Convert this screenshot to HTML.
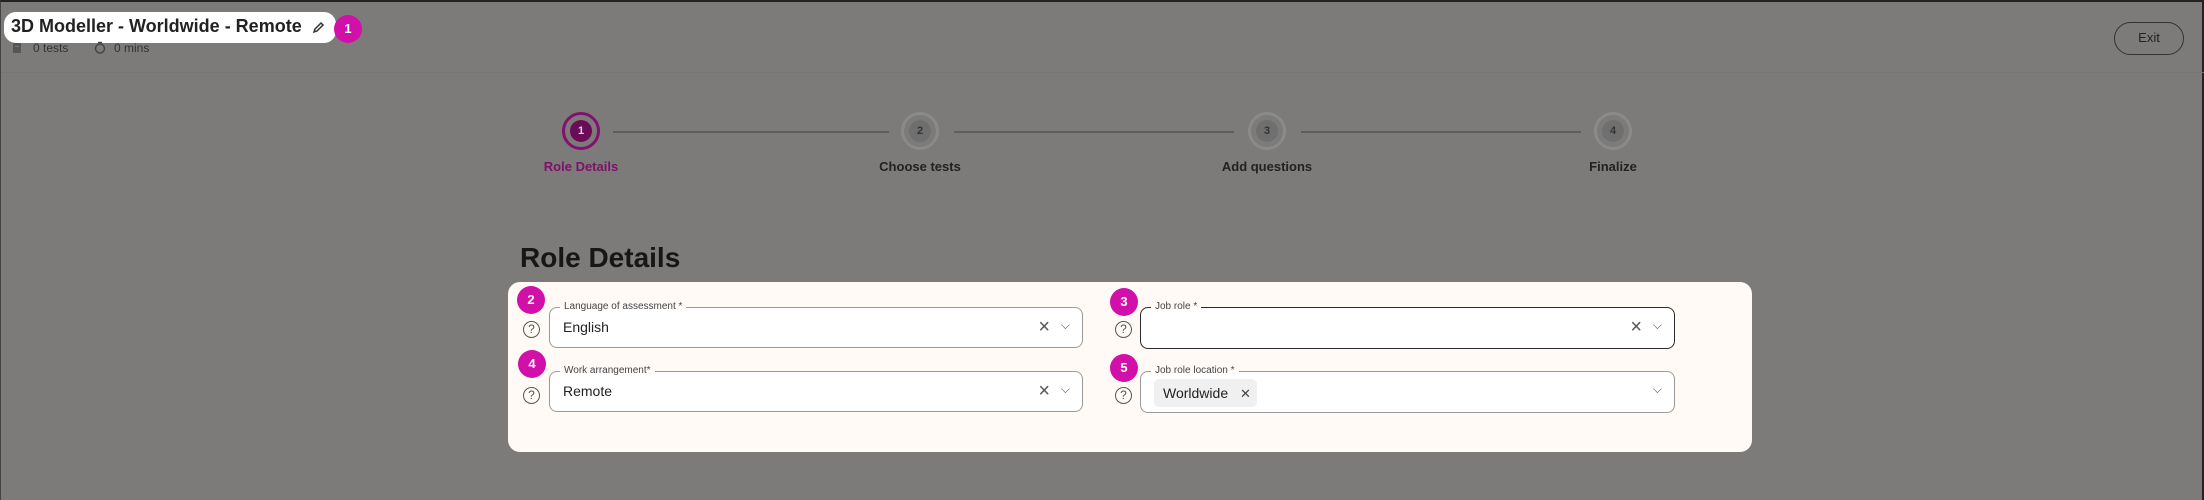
<!DOCTYPE html>
<html><head><meta charset="utf-8"><style>
*{box-sizing:border-box;margin:0;padding:0}
body{width:2204px;height:500px;background:#7c7b79;font-family:"Liberation Sans",sans-serif;position:relative;overflow:hidden;border-top:2px solid #222;border-right:2px solid #222;border-left:1px solid #444}
.a{position:absolute}
.badge{position:absolute;width:28px;height:28px;border-radius:50%;background:#d10fa9;color:#fff;font-weight:bold;font-size:13px;text-align:center;line-height:28px}
.q{position:absolute;width:17px;height:17px;border-radius:50%;border:1.5px solid #555;color:#555;font-size:12px;text-align:center;line-height:14px}
.field{position:absolute;border:1.3px solid #9a9a9a;border-radius:8px;background:#fff}
.lbl{position:absolute;top:-8px;left:10px;padding:0 4px;font-size:10px;color:#444;line-height:14px;background:linear-gradient(#fffaf6 50%,#fff 50%)}
.val{position:absolute;left:13px;top:11px;font-size:14px;color:#222}
.step{position:absolute;width:38px;height:38px;border-radius:50%;border:3px solid #8a8a8a;top:110px}
.step i{position:absolute;left:5px;top:5px;width:22px;height:22px;border-radius:50%;background:#6f6f6f;font-style:normal;font-size:11px;font-weight:bold;color:#333;text-align:center;line-height:22px}
.sl{position:absolute;top:157px;font-size:13px;color:#222;width:200px;text-align:center;font-weight:bold}
.line{position:absolute;top:129px;height:1.5px;background:#5e5e5e}
.x{position:absolute;right:32px;top:8px;font-size:20px;color:#555}
.ch{position:absolute;right:12px;top:10px;font-size:12px;color:#555}
</style></head><body>
<div class="a" style="left:3px;top:10px;width:332px;height:31px;background:#fff;border-radius:12px"></div>
<div class="a" style="left:10px;top:14px;font-size:18px;font-weight:bold;color:#222">3D Modeller - Worldwide - Remote</div>
<svg class="a" style="left:311px;top:19px" width="13" height="13" viewBox="0 0 13 13"><path d="M2 11 L3 8 L9 2 L11 4 L5 10 Z" fill="none" stroke="#333" stroke-width="1.5"/></svg>
<div class="badge" style="left:333px;top:13px">1</div>
<svg class="a" style="left:11px;top:40px" width="10" height="12"><rect x="1" y="1" width="8" height="10" fill="#555"/><rect x="3" y="4" width="4" height="1" fill="#7c7b79"/></svg>
<div class="a" style="left:32px;top:39px;font-size:12px;color:#333">0 tests</div>
<svg class="a" style="left:93px;top:39px" width="12" height="13"><circle cx="6" cy="7.5" r="4.5" fill="none" stroke="#444" stroke-width="1.4"/><line x1="4" y1="1.5" x2="8" y2="1.5" stroke="#444" stroke-width="1.4"/></svg>
<div class="a" style="left:113px;top:39px;font-size:12px;color:#333">0 mins</div>
<div class="a" style="left:2113px;top:20px;width:70px;height:33px;border:1.5px solid #333;border-radius:17px;text-align:center;line-height:30px;font-size:13px;color:#222">Exit</div>
<div class="a" style="left:0;top:70px;width:2204px;height:1px;background:#777674"></div>

<div class="step" style="left:561px;border-color:#84106f"><i style="background:#6a0c58;color:#ddd">1</i></div>
<div class="step" style="left:900px"><i>2</i></div>
<div class="step" style="left:1247px"><i>3</i></div>
<div class="step" style="left:1593px"><i>4</i></div>
<div class="line" style="left:612px;width:276px"></div>
<div class="line" style="left:953px;width:280px"></div>
<div class="line" style="left:1300px;width:280px"></div>
<div class="sl" style="left:480px;color:#80106c">Role Details</div>
<div class="sl" style="left:819px">Choose tests</div>
<div class="sl" style="left:1166px">Add questions</div>
<div class="sl" style="left:1512px">Finalize</div>

<div class="a" style="left:519px;top:240px;font-size:28px;font-weight:bold;color:#161616">Role Details</div>
<div class="a" style="left:507px;top:280px;width:1244px;height:170px;background:#fffaf6;border-radius:12px"></div>

<div class="badge" style="left:516px;top:284px">2</div>
<div class="q" style="left:522px;top:319px">?</div>
<div class="field" style="left:548px;top:305px;width:534px;height:41px"><div class="lbl">Language of assessment *</div><div class="val">English</div>
<div class="x">×</div><div class="ch">⌵</div></div>
<div class="badge" style="left:517px;top:348px">4</div>
<div class="q" style="left:522px;top:385px">?</div>
<div class="field" style="left:548px;top:369px;width:534px;height:41px"><div class="lbl">Work arrangement*</div><div class="val">Remote</div>
<div class="x">×</div><div class="ch">⌵</div></div>

<div class="badge" style="left:1109px;top:286px">3</div>
<div class="q" style="left:1114px;top:319px">?</div>
<div class="field" style="left:1139px;top:305px;width:535px;height:42px;border:1.6px solid #2a2a2a"><div class="lbl">Job role *</div>
<div class="x">×</div><div class="ch">⌵</div></div>
<div class="badge" style="left:1109px;top:352px">5</div>
<div class="q" style="left:1114px;top:385px">?</div>
<div class="field" style="left:1139px;top:369px;width:535px;height:42px"><div class="lbl">Job role location *</div>
<div class="a" style="left:13px;top:7px;width:103px;height:28px;background:#f0f0f0;border-radius:5px;font-size:14px;color:#222;line-height:28px;padding-left:9px">Worldwide <span style="font-size:13px;margin-left:8px;color:#444">✕</span></div>
<div class="ch">⌵</div></div>
</body></html>
